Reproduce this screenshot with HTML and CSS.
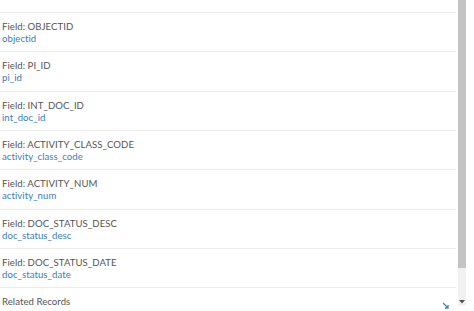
FILE: index.html
```html
<!DOCTYPE html>
<html>
<head>
<meta charset="utf-8">
<link rel="stylesheet" href="styles.css">
</head>
<body>
<div class="frame">
  <div class="list">
    <div class="top"></div>
    <div class="row"><div class="label">Field: OBJECTID</div><div class="value">objectid</div></div>
    <div class="row"><div class="label">Field: PI_ID</div><div class="value">pi_id</div></div>
    <div class="row"><div class="label">Field: INT_DOC_ID</div><div class="value">int_doc_id</div></div>
    <div class="row"><div class="label">Field: ACTIVITY_CLASS_CODE</div><div class="value">activity_class_code</div></div>
    <div class="row"><div class="label">Field: ACTIVITY_NUM</div><div class="value">activity_num</div></div>
    <div class="row"><div class="label">Field: DOC_STATUS_DESC</div><div class="value">doc_status_desc</div></div>
    <div class="row"><div class="label">Field: DOC_STATUS_DATE</div><div class="value">doc_status_date</div></div>
    <div class="row related"><div class="label">Related Records</div>
      <svg class="resize" width="8" height="8" viewBox="0 0 8 8"><path d="M1 1 L6 6 M6 3 L6 6 L3 6" stroke="#3b8cc4" stroke-width="1.3" fill="none"/></svg>
    </div>
  </div>
  <div class="scrollbar">
    <div class="thumb"></div>
    <div class="track"></div>
    <div class="arrow"><svg width="6" height="4" viewBox="0 0 6 4"><path d="M0 0 L6 0 L3 3.5 Z" fill="#505050"/></svg></div>
  </div>
</div>
</body>
</html>
```
FILE: styles.css
```css
html, body {
  margin: 0;
  padding: 0;
  background: #ffffff;
  overflow: hidden;
}
.frame {
  display: flex;
  width: 474px;
  height: 311px;
  overflow: hidden;
  font-family: Lato, "Noto Sans", sans-serif;
}
.list {
  width: 456px;
  height: 311px;
  overflow: hidden;
  flex: none;
}
.top {
  height: 12px;
}
.row {
  box-sizing: border-box;
  height: 39.33px;
  border-top: 1px solid #ececec;
  padding: 7px 0 0 2px;
}
.related {
  height: 23px;
  position: relative;
}
.label {
  font-size: 9.6px;
  line-height: 13px;
  letter-spacing: 0.05px;
  color: #555555;
}
.value {
  font-size: 9.6px;
  line-height: 12.5px;
  letter-spacing: 0.05px;
  color: #3a80b8;
}
.resize {
  position: absolute;
  left: 442px;
  top: 14px;
}
.scrollbar {
  width: 18px;
  flex: none;
  display: flex;
  flex-direction: column;
  padding-left: 2px;
  box-sizing: border-box;
}
.thumb {
  width: 8px;
  height: 268px;
  background: #c4c4c4;
}
.track {
  width: 8px;
  height: 30px;
  background: #f1f1f1;
}
.arrow {
  width: 8px;
  height: 8px;
  background: #f1f1f1;
  display: flex;
  align-items: center;
  justify-content: center;
}
```
